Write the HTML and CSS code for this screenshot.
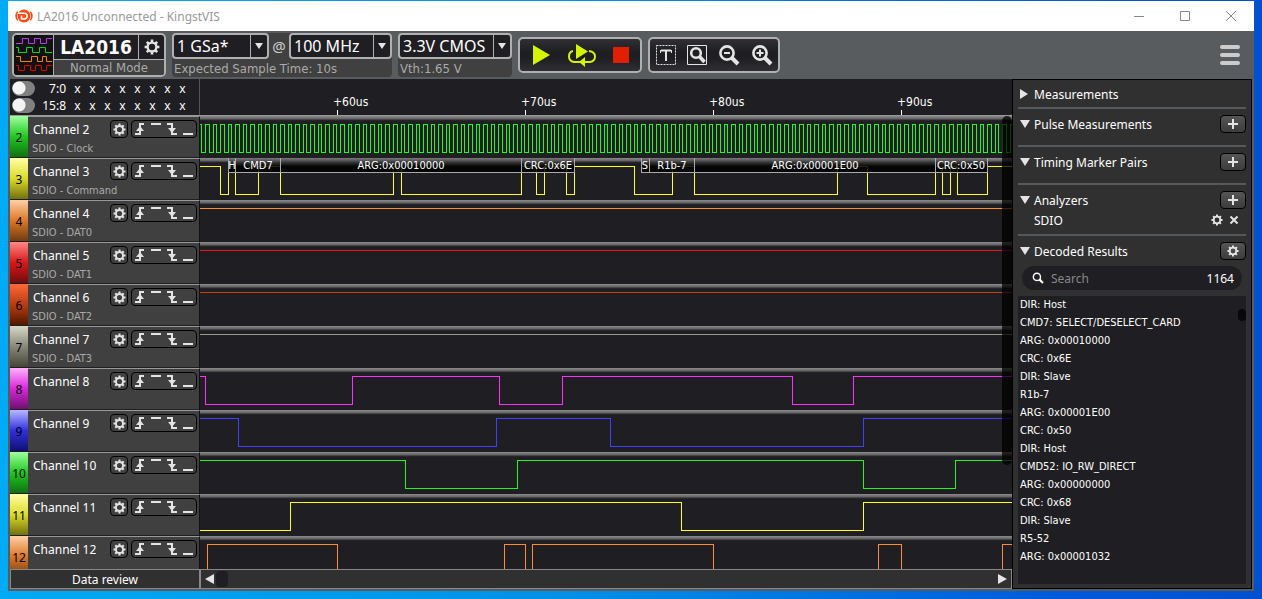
FILE: index.html
```html
<!DOCTYPE html>
<html lang="en">
<head>
    <meta charset="UTF-8">
    <meta name="viewport" content="width=device-width, initial-scale=1.0">
    <title>LA2016 Unconnected - KingstVIS</title>
    <link rel="stylesheet" href="styles.css">
</head>
<body>
    <!-- Shared icons -->
    <svg class="defs" width="0" height="0" aria-hidden="true">
        <symbol id="gear" viewBox="0 0 16 16">
            <circle cx="8" cy="8" r="4.4" fill="none" stroke="currentColor" stroke-width="2.4"/>
            <path d="M8 0.6v2.6M8 12.8v2.6M0.6 8h2.6M12.8 8h2.6M2.8 2.8l1.8 1.8M11.4 11.4l1.8 1.8M2.8 13.2l1.8-1.8M11.4 4.6l1.8-1.8" stroke="currentColor" stroke-width="2.6" fill="none"/>
        </symbol>
        <symbol id="rise" viewBox="0 0 12 14">
            <path d="M1 12h5V2h4" fill="none" stroke="currentColor" stroke-width="2"/>
            <path d="M2 9l4-5 4 5z" fill="currentColor"/>
        </symbol>
        <symbol id="high" viewBox="0 0 12 14">
            <path d="M1 2h10" stroke="currentColor" stroke-width="2"/>
        </symbol>
        <symbol id="fall" viewBox="0 0 12 14">
            <path d="M1 2h5v10h5" fill="none" stroke="currentColor" stroke-width="2"/>
            <path d="M2 6l4 5 4-5z" fill="currentColor"/>
        </symbol>
        <symbol id="low" viewBox="0 0 12 14">
            <path d="M1 12h10" stroke="currentColor" stroke-width="2"/>
        </symbol>
        <symbol id="plus" viewBox="0 0 12 12">
            <path d="M6 1v10M1 6h10" stroke="currentColor" stroke-width="2"/>
        </symbol>
        <symbol id="lens" viewBox="0 0 22 22">
            <circle cx="9" cy="9" r="6.6" fill="none" stroke="currentColor" stroke-width="2.6"/>
            <path d="M13.5 13.5l6.5 6.5" stroke="currentColor" stroke-width="4"/>
        </symbol>
    </svg>

    <div class="window">
        <header class="titlebar">
            <svg class="logo" width="18" height="14" viewBox="0 0 18 14">
                <circle cx="9" cy="7" r="6.5" fill="#ff4a12"/>
                <path d="M2.6 2.6Q-.4 7 2.6 11.4M15.4 2.6Q18.4 7 15.4 11.4" fill="none" stroke="#ff4a12" stroke-width="1.6"/>
                <path d="M3 4.2h6.2a2.8 2.8 0 0 1 0 5.8H6.6V6.5" fill="none" stroke="#fff" stroke-width="1.6"/>
            </svg>
            <h1>LA2016 Unconnected - KingstVIS</h1>
            <button class="win-btn" aria-label="Minimize"><svg width="12" height="12"><path d="M1 6.5h10"/></svg></button>
            <button class="win-btn" aria-label="Maximize"><svg width="12" height="12"><path d="M1.5 1.5h9v9h-9z"/></svg></button>
            <button class="win-btn" aria-label="Close"><svg width="12" height="12"><path d="M1 1l10 10M11 1L1 11"/></svg></button>
        </header>

        <div class="toolbar">
            <div class="device">
                <svg class="device-icon" width="39" height="40" viewBox="0 0 39 40" fill="none">
                    <path stroke="#c030ff" d="M2 8.500h6.500v-5h6v5h6v-5h6v5h6v-5h5.500"/>
                    <path stroke="#00d820" d="M2 12.500h2.500v5h8v-5h6v5h7v-5h6v5h6.500"/>
                    <path stroke="#ff8000" d="M2 21.500h4.500v5h11v-5h6v5h5v-5h4v5h5.500"/>
                    <path stroke="#e00000" d="M2 30.500h2.500v5h6v-5h6v5h5v-5h6v5h5v-5h5.500"/>
                </svg>
                <div class="device-body">
                    <div class="device-top">
                        <strong>LA2016</strong>
                        <button class="device-gear" aria-label="Device settings"><svg width="16" height="16"><use href="#gear"/></svg></button>
                    </div>
                    <div class="device-mode">Normal Mode</div>
                </div>
            </div>

            <div class="setting">
                <div class="setting-row">
                    <span class="combo rate"><select aria-label="Sample depth"><option>1 GSa*</option></select></span>
                    <span class="at">@</span>
                    <span class="combo freq"><select aria-label="Sample rate"><option>100 MHz</option></select></span>
                </div>
                <div class="setting-note">Expected Sample Time: 10s</div>
            </div>

            <div class="setting">
                <div class="setting-row">
                    <span class="combo level"><select aria-label="Threshold"><option>3.3V CMOS</option></select></span>
                </div>
                <div class="setting-note">Vth:1.65 V</div>
            </div>

            <div class="tools run">
                <button aria-label="Start"><svg width="20" height="22"><path fill="#d4f400" d="M2 1l17 10L2 21z"/></svg></button>
                <button aria-label="Loop"><svg width="30" height="26" viewBox="0 0 30 26">
                    <path d="M9 2l12 7.5L9 17z" fill="#d4f400"/>
                    <path d="M6 9Q2 10 2 14.500T7 20h16q5-1 5-5.500T22 9" fill="none" stroke="#d4f400" stroke-width="2"/>
                    <path d="M12 20l6-5v10z" fill="#d4f400"/>
                </svg></button>
                <button aria-label="Stop"><svg width="16" height="16"><path fill="#e02000" d="M0 0h16v16H0z"/></svg></button>
            </div>

            <div class="tools view">
                <button aria-label="Text"><svg width="20" height="20" fill="none" stroke="#e4e4e4">
                    <path d="M.5.5h19v19H.5z" stroke-dasharray="2 1"/><path d="M5 5.500h10M10 5v11" stroke-width="2"/><path d="M4.500 5v3M15.500 5v3"/>
                </svg></button>
                <button aria-label="Zoom to fit"><svg width="20" height="20" viewBox="0 0 20 20">
                    <path d="M.5.5h19v19H.5z" fill="none" stroke="#e4e4e4"/>
                    <circle cx="9" cy="8" r="4.800" fill="none" stroke="#e4e4e4" stroke-width="2.600"/><path d="M12 11l5.500 6" stroke="#e4e4e4" stroke-width="3.600"/>
                </svg></button>
                <button aria-label="Zoom out"><svg width="22" height="22"><use href="#lens"/><path d="M6 9h6" stroke="#e4e4e4" stroke-width="2"/></svg></button>
                <button aria-label="Zoom in"><svg width="22" height="22"><use href="#lens"/><path d="M5.500 9h7M9 5.500v7" stroke="#e4e4e4" stroke-width="2"/></svg></button>
            </div>

            <button class="menu" aria-label="Menu"><i></i><i></i><i></i></button>
        </div>

        <div class="workspace">
            <main class="scope">
                <div class="scope-head">
                    <div class="buses">
                        <label class="bus"><input type="checkbox"><span class="bus-name">7:0</span><span class="bits"><i>x</i><i>x</i><i>x</i><i>x</i><i>x</i><i>x</i><i>x</i><i>x</i></span></label>
                        <label class="bus"><input type="checkbox"><span class="bus-name">15:8</span><span class="bits"><i>x</i><i>x</i><i>x</i><i>x</i><i>x</i><i>x</i><i>x</i><i>x</i></span></label>
                    </div>
                    <div class="ruler"><span>+60us</span><span>+70us</span><span>+80us</span><span>+90us</span></div>
                </div>

                <div class="channels">
                    <section class="channel">
                        <div class="num green">2</div>
                        <div class="info">
                            <div class="info-top"><h2>Channel 2</h2>
                                <button class="gear-btn" aria-label="Channel 2 settings"><svg width="13" height="13"><use href="#gear"/></svg></button>
                                <div class="trigger"><button aria-label="Rising edge"><svg><use href="#rise"/></svg></button><button aria-label="High level"><svg><use href="#high"/></svg></button><button aria-label="Falling edge"><svg><use href="#fall"/></svg></button><button aria-label="Low level"><svg><use href="#low"/></svg></button></div>
                            </div>
                            <p>SDIO - Clock</p>
                        </div>
                        <svg class="trace">
                            <!-- 25 clock cycles per 10us division -->
                            <pattern id="clock" x="5" y="0" width="188" height="42" patternUnits="userSpaceOnUse">
                                <path stroke="#20f820" d="M.5 36.500v-28h4v28h4v-28h3v28h4v-28h4v28h4v-28h3v28h4v-28h4v28h4v-28h3v28h4v-28h4v28h4v-28h3v28h4v-28h4v28h4v-28h3v28h4v-28h4v28h4v-28h3v28h4v-28h4v28h4v-28h3v28h4v-28h4v28h4v-28h3v28h4v-28h4v28h4v-28h3v28h4v-28h4v28h4v-28h3v28h4v-28h4v28h4v-28h3v28h4v-28h4v28h4v-28h3v28h4v-28h4v28h4"/>
                            </pattern>
                            <rect class="fill" width="100%" height="42" fill="url(#clock)"/>
                        </svg>
                    </section>

                    <section class="channel">
                        <div class="num yellow">3</div>
                        <div class="info">
                            <div class="info-top"><h2>Channel 3</h2>
                                <button class="gear-btn" aria-label="Channel 3 settings"><svg width="13" height="13"><use href="#gear"/></svg></button>
                                <div class="trigger"><button aria-label="Rising edge"><svg><use href="#rise"/></svg></button><button aria-label="High level"><svg><use href="#high"/></svg></button><button aria-label="Falling edge"><svg><use href="#fall"/></svg></button><button aria-label="Low level"><svg><use href="#low"/></svg></button></div>
                            </div>
                            <p>SDIO - Command</p>
                        </div>
                        <svg class="trace">
                            <linearGradient id="shade" x2="0" y2="1"><stop offset="0" stop-color="#777"/><stop offset=".6" stop-color="#000"/></linearGradient>
                            <path stroke="#ffff20" d="M0 8.500H20.500v28h8v-28h7v28h23v-28h22v28H193.500v-28h8v28H321.500v-28h15v28h8v-28h22v28h8v-28h60v28h38v-28h22v28H637.500v-28h30v28h68v-28h7v28h8v-28h7v28h30v-28H2000"/>
                            <g class="frames">
                                <rect x="28" width="346" height="14"/>
                                <rect x="441" width="347" height="14"/>
                                <path d="M28.500 0v14.500H374.500V0M35.500 0v14M80.500 0v14M321.500 0v14M441.500 0v14.500H787.500V0M449.500 0v14M494.500 0v14M735.500 0v14"/>
                                <text x="32" y="11">H</text><text x="58" y="11">CMD7</text><text x="201" y="11">ARG:0x00010000</text><text x="348" y="11">CRC:0x6E</text>
                                <text x="445" y="11">S</text><text x="472" y="11">R1b-7</text><text x="615" y="11">ARG:0x00001E00</text><text x="761" y="11">CRC:0x50</text>
                            </g>
                        </svg>
                    </section>

                    <section class="channel">
                        <div class="num orange">4</div>
                        <div class="info">
                            <div class="info-top"><h2>Channel 4</h2>
                                <button class="gear-btn" aria-label="Channel 4 settings"><svg width="13" height="13"><use href="#gear"/></svg></button>
                                <div class="trigger"><button aria-label="Rising edge"><svg><use href="#rise"/></svg></button><button aria-label="High level"><svg><use href="#high"/></svg></button><button aria-label="Falling edge"><svg><use href="#fall"/></svg></button><button aria-label="Low level"><svg><use href="#low"/></svg></button></div>
                            </div>
                            <p>SDIO - DAT0</p>
                        </div>
                        <svg class="trace"><path stroke="#ff8c28" d="M0 8.500H2000"/></svg>
                    </section>

                    <section class="channel">
                        <div class="num red">5</div>
                        <div class="info">
                            <div class="info-top"><h2>Channel 5</h2>
                                <button class="gear-btn" aria-label="Channel 5 settings"><svg width="13" height="13"><use href="#gear"/></svg></button>
                                <div class="trigger"><button aria-label="Rising edge"><svg><use href="#rise"/></svg></button><button aria-label="High level"><svg><use href="#high"/></svg></button><button aria-label="Falling edge"><svg><use href="#fall"/></svg></button><button aria-label="Low level"><svg><use href="#low"/></svg></button></div>
                            </div>
                            <p>SDIO - DAT1</p>
                        </div>
                        <svg class="trace"><path stroke="#f01818" d="M0 8.500H2000"/></svg>
                    </section>

                    <section class="channel">
                        <div class="num rust">6</div>
                        <div class="info">
                            <div class="info-top"><h2>Channel 6</h2>
                                <button class="gear-btn" aria-label="Channel 6 settings"><svg width="13" height="13"><use href="#gear"/></svg></button>
                                <div class="trigger"><button aria-label="Rising edge"><svg><use href="#rise"/></svg></button><button aria-label="High level"><svg><use href="#high"/></svg></button><button aria-label="Falling edge"><svg><use href="#fall"/></svg></button><button aria-label="Low level"><svg><use href="#low"/></svg></button></div>
                            </div>
                            <p>SDIO - DAT2</p>
                        </div>
                        <svg class="trace"><path stroke="#c84010" d="M0 8.500H2000"/></svg>
                    </section>

                    <section class="channel">
                        <div class="num grey">7</div>
                        <div class="info">
                            <div class="info-top"><h2>Channel 7</h2>
                                <button class="gear-btn" aria-label="Channel 7 settings"><svg width="13" height="13"><use href="#gear"/></svg></button>
                                <div class="trigger"><button aria-label="Rising edge"><svg><use href="#rise"/></svg></button><button aria-label="High level"><svg><use href="#high"/></svg></button><button aria-label="Falling edge"><svg><use href="#fall"/></svg></button><button aria-label="Low level"><svg><use href="#low"/></svg></button></div>
                            </div>
                            <p>SDIO - DAT3</p>
                        </div>
                        <svg class="trace"><path stroke="#9a9a88" d="M0 8.500H2000"/></svg>
                    </section>

                    <section class="channel">
                        <div class="num magenta">8</div>
                        <div class="info">
                            <div class="info-top"><h2>Channel 8</h2>
                                <button class="gear-btn" aria-label="Channel 8 settings"><svg width="13" height="13"><use href="#gear"/></svg></button>
                                <div class="trigger"><button aria-label="Rising edge"><svg><use href="#rise"/></svg></button><button aria-label="High level"><svg><use href="#high"/></svg></button><button aria-label="Falling edge"><svg><use href="#fall"/></svg></button><button aria-label="Low level"><svg><use href="#low"/></svg></button></div>
                            </div>
                        </div>
                        <svg class="trace"><path stroke="#ff30ff" d="M0 8.500H5.500v28H152.500v-28H299.500v28H362.500v-28H592.500v28H653.500v-28H2000"/></svg>
                    </section>

                    <section class="channel">
                        <div class="num blue">9</div>
                        <div class="info">
                            <div class="info-top"><h2>Channel 9</h2>
                                <button class="gear-btn" aria-label="Channel 9 settings"><svg width="13" height="13"><use href="#gear"/></svg></button>
                                <div class="trigger"><button aria-label="Rising edge"><svg><use href="#rise"/></svg></button><button aria-label="High level"><svg><use href="#high"/></svg></button><button aria-label="Falling edge"><svg><use href="#fall"/></svg></button><button aria-label="Low level"><svg><use href="#low"/></svg></button></div>
                            </div>
                        </div>
                        <svg class="trace"><path stroke="#4040ff" d="M0 8.500H38.500v28H296.500v-28H410.500v28H663.500v-28H2000"/></svg>
                    </section>

                    <section class="channel">
                        <div class="num green">10</div>
                        <div class="info">
                            <div class="info-top"><h2>Channel 10</h2>
                                <button class="gear-btn" aria-label="Channel 10 settings"><svg width="13" height="13"><use href="#gear"/></svg></button>
                                <div class="trigger"><button aria-label="Rising edge"><svg><use href="#rise"/></svg></button><button aria-label="High level"><svg><use href="#high"/></svg></button><button aria-label="Falling edge"><svg><use href="#fall"/></svg></button><button aria-label="Low level"><svg><use href="#low"/></svg></button></div>
                            </div>
                        </div>
                        <svg class="trace"><path stroke="#20f820" d="M0 8.500H205.500v28H317.500v-28H663.500v28H755.500v-28H2000"/></svg>
                    </section>

                    <section class="channel">
                        <div class="num yellow">11</div>
                        <div class="info">
                            <div class="info-top"><h2>Channel 11</h2>
                                <button class="gear-btn" aria-label="Channel 11 settings"><svg width="13" height="13"><use href="#gear"/></svg></button>
                                <div class="trigger"><button aria-label="Rising edge"><svg><use href="#rise"/></svg></button><button aria-label="High level"><svg><use href="#high"/></svg></button><button aria-label="Falling edge"><svg><use href="#fall"/></svg></button><button aria-label="Low level"><svg><use href="#low"/></svg></button></div>
                            </div>
                        </div>
                        <svg class="trace"><path stroke="#ffff20" d="M0 36.500H90.500v-28H481.500v28H663.500v-28H2000"/></svg>
                    </section>

                    <section class="channel">
                        <div class="num orange">12</div>
                        <div class="info">
                            <div class="info-top"><h2>Channel 12</h2>
                                <button class="gear-btn" aria-label="Channel 12 settings"><svg width="13" height="13"><use href="#gear"/></svg></button>
                                <div class="trigger"><button aria-label="Rising edge"><svg><use href="#rise"/></svg></button><button aria-label="High level"><svg><use href="#high"/></svg></button><button aria-label="Falling edge"><svg><use href="#fall"/></svg></button><button aria-label="Low level"><svg><use href="#low"/></svg></button></div>
                            </div>
                        </div>
                        <svg class="trace"><path stroke="#ff8c28" d="M0 36.500H7.500v-28H137.500v28H304.500v-28H325.500v28H332.500v-28H513.500v28H678.500v-28H701.500v28H802.500v-28H2000"/></svg>
                    </section>
                    <div class="v-thumb"></div>
                </div>

                <footer class="scope-foot">
                    <button class="review">Data review</button>
                    <div class="h-scroll">
                        <button aria-label="Scroll left"><svg width="9" height="10"><path d="M9 0v10L0 5z"/></svg></button>
                        <span class="h-thumb"></span>
                        <button class="right" aria-label="Scroll right"><svg width="9" height="10"><path d="M0 0v10l9-5z"/></svg></button>
                    </div>
                </footer>
            </main>

            <aside class="side">
                <section class="panel">
                    <div class="panel-head"><span class="arrow closed"></span><h3>Measurements</h3></div>
                </section>
                <section class="panel">
                    <div class="panel-head"><span class="arrow"></span><h3>Pulse Measurements</h3><button aria-label="Add pulse measurement"><svg width="12" height="12"><use href="#plus"/></svg></button></div>
                </section>
                <section class="panel">
                    <div class="panel-head"><span class="arrow"></span><h3>Timing Marker Pairs</h3><button aria-label="Add marker pair"><svg width="12" height="12"><use href="#plus"/></svg></button></div>
                </section>
                <section class="panel analyzers">
                    <div class="panel-head"><span class="arrow"></span><h3>Analyzers</h3><button aria-label="Add analyzer"><svg width="12" height="12"><use href="#plus"/></svg></button></div>
                    <div class="analyzer">
                        <span>SDIO</span>
                        <button aria-label="SDIO settings"><svg width="12" height="12"><use href="#gear"/></svg></button>
                        <button aria-label="Remove SDIO"><svg width="10" height="10"><path d="M1.500 1.500l7 7M8.500 1.500l-7 7" stroke="#e4e4e4" stroke-width="2"/></svg></button>
                    </div>
                </section>
                <section class="panel decoded">
                    <div class="panel-head"><span class="arrow"></span><h3>Decoded Results</h3><button aria-label="Decoder settings"><svg width="12" height="12"><use href="#gear"/></svg></button></div>
                    <label class="search">
                        <svg width="12" height="12" viewBox="0 0 22 22"><use href="#lens"/></svg>
                        <input type="text" placeholder="Search" aria-label="Search">
                        <span>1164</span>
                    </label>
                    <div class="results">
                        <ul>
                            <li>DIR: Host</li>
                            <li>CMD7: SELECT/DESELECT_CARD</li>
                            <li>ARG: 0x00010000</li>
                            <li>CRC: 0x6E</li>
                            <li>DIR: Slave</li>
                            <li>R1b-7</li>
                            <li>ARG: 0x00001E00</li>
                            <li>CRC: 0x50</li>
                            <li>DIR: Host</li>
                            <li>CMD52: IO_RW_DIRECT</li>
                            <li>ARG: 0x00000000</li>
                            <li>CRC: 0x68</li>
                            <li>DIR: Slave</li>
                            <li>R5-52</li>
                            <li>ARG: 0x00001032</li>
                        </ul>
                        <div class="list-thumb"></div>
                    </div>
                </section>
            </aside>
        </div>
    </div>
</body>
</html>
```
FILE: styles.css
```css
* {
    box-sizing: border-box;
}

body {
    margin: 0;
    padding: 1px 8px 8px;
    height: 100vh;
    display: flex;
    flex-direction: column;
    overflow: hidden;
    font-family: "Noto Sans", sans-serif;
    font-size: 12px;
    color: #fff;
    background: linear-gradient(to right, #00aaf4, #0090e8 45%, #0058dc 85%, #0050d0);
}

h1, h2, h3, p, ul {
    margin: 0;
    padding: 0;
    font-size: 12px;
    font-weight: normal;
}

button {
    display: flex;
    align-items: center;
    justify-content: center;
    margin: 0;
    padding: 0;
    border: none;
    background: none;
    color: #e4e4e4;
    font-family: inherit;
    font-size: 12px;
    cursor: pointer;
}

svg {
    display: block;
    flex: none;
}

.defs {
    position: absolute;
}

.window {
    flex: 1;
    min-height: 0;
    display: flex;
    flex-direction: column;
    background-color: #595c5f;
}

/* Title bar */
.titlebar {
    height: 30px;
    flex: none;
    display: flex;
    align-items: center;
    padding-left: 7px;
    background-color: #fff;
}

.titlebar h1 {
    flex: 1;
    padding-left: 4px;
    color: #999;
}

.win-btn {
    width: 46px;
    height: 30px;
}

.win-btn svg {
    fill: none;
    stroke: #888;
}

/* Toolbar */
.toolbar {
    flex: none;
    height: 48px;
    display: flex;
    align-items: flex-start;
    gap: 6px;
    padding: 2px 14px 0 4px;
}

.device {
    display: flex;
    width: 154px;
    height: 44px;
    border: 2px solid #b0b0b0;
    border-radius: 5px;
    background-color: #1f1e22;
    overflow: hidden;
}

.device-icon {
    background-color: #111;
}

.device-body {
    flex: 1;
    border-left: 1px solid #b0b0b0;
}

.device-top {
    display: flex;
    height: 25px;
    border-bottom: 1px solid #b0b0b0;
}

.device-top strong {
    flex: 1;
    font-family: "DejaVu Sans Condensed", "DejaVu Sans", sans-serif;
    font-size: 19px;
    line-height: 24px;
    text-align: center;
}

.device-gear {
    width: 26px;
    border-left: 1px solid #b0b0b0;
}

.device-mode {
    height: 15px;
    line-height: 16px;
    font-family: "DejaVu Sans Condensed", "DejaVu Sans", sans-serif;
    font-size: 13px;
    text-align: center;
    color: #aaa;
    background-color: #404040;
}

.setting {
    height: 44px;
    border-radius: 4px;
    background-color: #404040;
}

.setting-row {
    display: flex;
    align-items: center;
}

.at {
    width: 20px;
    line-height: 20px;
    text-align: center;
    font-size: 15px;
    color: #ccc;
}

.combo {
    position: relative;
    height: 26px;
    border: 2px solid #b0b0b0;
    border-radius: 4px;
    background-color: #1f1e22;
}

.rate {
    width: 97px;
}

.freq {
    width: 103px;
}

.level {
    width: 114px;
}

.combo select {
    appearance: none;
    display: block;
    width: 100%;
    height: 22px;
    padding: 0 17px 0 3px;
    border: none;
    background: none;
    color: #fff;
    font-family: inherit;
    font-size: 16px;
    line-height: 22px;
}

.combo::before {
    content: "";
    position: absolute;
    top: 0;
    bottom: 0;
    right: 16px;
    border-left: 1px solid #b0b0b0;
}

.combo::after {
    content: "";
    position: absolute;
    top: 8px;
    right: 4px;
    border: 4px solid transparent;
    border-top: 6px solid #e4e4e4;
    border-bottom: none;
}

.setting-note {
    padding-left: 2px;
    line-height: 19px;
    font-family: "DejaVu Sans Condensed", "DejaVu Sans", sans-serif;
    font-size: 13px;
    color: #aaa;
}

.tools {
    display: flex;
    align-items: center;
    justify-content: space-around;
    height: 36px;
    margin-top: 4px;
    border: 2px solid #b0b0b0;
    border-radius: 5px;
    background: linear-gradient(#303034, #1f1e22 40%, #1f1e22 60%, #303034);
}

.run {
    width: 124px;
    padding: 0 3px;
}

.view {
    width: 132px;
}

.menu {
    flex-direction: column;
    gap: 4px;
    margin: 12px 0 0 auto;
}

.menu i {
    width: 20px;
    height: 4px;
    border-radius: 2px;
    background-color: #ccc;
}

/* Workspace */
.workspace {
    flex: 1;
    min-height: 0;
    display: flex;
    padding: 0 2px 2px;
}

.scope {
    flex: 1;
    min-width: 0;
    display: flex;
    flex-direction: column;
    background-color: #1f1e22;
}

.scope-head {
    flex: none;
    display: flex;
    height: 37px;
    border-bottom: 1px solid #999;
}

.buses {
    width: 190px;
    flex: none;
    padding: 1px 2px 0;
    border-right: 1px solid #555;
}

.bus {
    display: flex;
    align-items: center;
    height: 17px;
}

.bus input {
    appearance: none;
    width: 23px;
    height: 15px;
    margin: 0;
    border-radius: 8px;
    background: radial-gradient(circle at 7px 7px, #f4f4f4 6px, #808080 7px);
}

.bus-name {
    width: 31px;
    text-align: right;
}

.bits {
    display: flex;
    padding-left: 4px;
}

.bits i {
    width: 15px;
    text-align: center;
    font-style: normal;
}

.ruler {
    flex: 1;
    display: flex;
    align-items: flex-end;
    padding-left: 133px;
    overflow: hidden;
    font-family: "DejaVu Sans Condensed", "DejaVu Sans", sans-serif;
}

.ruler span {
    flex: none;
    width: 188px;
    line-height: 15px;
}

.ruler span::after {
    content: "";
    display: block;
    width: 1px;
    height: 5px;
    margin-left: 4px;
    background-color: #fff;
}

/* Channels */
.channels {
    position: relative;
    flex: 1;
    min-height: 0;
    overflow: hidden;
}

.channel {
    display: flex;
    height: 42px;
}

.num {
    width: 18px;
    flex: none;
    padding-top: 2px;
    border-bottom: 1px solid #1f1e22;
    line-height: 40px;
    text-align: center;
    font-size: 12px;
    color: #000;
}

.green { background: linear-gradient(#a0ffa0, #20c820 50%, #107010); }
.yellow { background: linear-gradient(#ffffa8, #dcdc28 50%, #707010); }
.orange { background: linear-gradient(#ffd0a8, #dc7828 50%, #703c10); }
.red { background: linear-gradient(#ff8888, #d81818 50%, #700c0c); }
.rust { background: linear-gradient(#ff6838, #b83c10 50%, #501800); }
.grey { background: linear-gradient(#d8d8c8, #88887a 50%, #444438); }
.magenta { background: linear-gradient(#ffb0ff, #d828d8 50%, #701070); }
.blue { background: linear-gradient(#b8b8ff, #3030e0 50%, #101070); }

.info {
    width: 172px;
    flex: none;
    padding: 3px 2px 0 4px;
    border-top: 1px solid #999;
    border-right: 1px solid #111;
    border-bottom: 1px solid #1f1e22;
    background-color: #404040;
}

.info-top {
    display: flex;
    align-items: center;
    height: 18px;
    gap: 3px;
}

.info h2 {
    flex: 1;
    padding-left: 1px;
}

.info p {
    padding-top: 4px;
    line-height: 14px;
    font-family: "DejaVu Sans Condensed", "DejaVu Sans", sans-serif;
    font-size: 11px;
    color: #aaa;
}

.gear-btn,
.trigger {
    height: 18px;
    border: 1px solid #000;
    border-radius: 4px;
}

.gear-btn {
    width: 18px;
}

.trigger {
    display: flex;
    width: 66px;
}

.trigger button {
    width: 16px;
}

.trigger svg {
    width: 12px;
    height: 14px;
}

.trace {
    flex: 1;
    min-width: 0;
    height: 42px;
    background: linear-gradient(#8c8c8c, #606062 3px, #2c2c30 4px, #1f1e22 5px);
    overflow: hidden;
    fill: none;
    shape-rendering: crispEdges;
}

.frames rect {
    fill: url(#shade);
    fill-opacity: 0.85;
}

.frames path {
    stroke: #aaa;
}

.frames text {
    fill: #fff;
    font-family: "DejaVu Sans Condensed", "DejaVu Sans", sans-serif;
    font-size: 11px;
    text-anchor: middle;
}

.v-thumb {
    position: absolute;
    top: 0;
    right: 0;
    width: 10px;
    height: 349px;
    border-radius: 5px;
    background-color: rgba(0, 0, 0, 0.75);
}

.scope-foot {
    flex: none;
    display: flex;
    height: 20px;
}

.review,
.h-scroll {
    border: 1px solid #888;
    background-color: #303030;
}

.review {
    width: 190px;
    color: #fff;
}

.h-scroll {
    flex: 1;
    display: flex;
    align-items: center;
    gap: 2px;
    padding: 0 4px;
}

.h-scroll svg {
    fill: #e4e4e4;
}

.h-thumb {
    width: 12px;
    height: 16px;
    border-radius: 4px;
    background-color: #1f1e22;
}

.right {
    margin-left: auto;
}

/* Side panel */
.side {
    width: 240px;
    flex: none;
    display: flex;
    flex-direction: column;
    padding: 0 5px 4px;
    border: 1px solid #000;
    background-color: #303030;
}

.panel {
    padding: 6px 0 12px;
    border-bottom: 2px solid #55595c;
}

.panel:first-child {
    padding: 5px 0 4px;
}

.panel-head {
    display: flex;
    align-items: center;
    height: 18px;
}

.panel-head h3 {
    flex: 1;
    padding-left: 4px;
}

.arrow {
    width: 10px;
    margin-left: 2px;
    border: 5px solid transparent;
    border-top: 8px solid #e4e4e4;
    border-bottom: none;
}

.arrow.closed {
    border: 5px solid transparent;
    border-left: 8px solid #e4e4e4;
    border-right: none;
}

.panel-head button {
    width: 26px;
    height: 18px;
    border: 1px solid #000;
    border-radius: 4px;
    background: linear-gradient(#555, #3c3c3c);
}

.analyzers {
    padding-bottom: 5px;
}

.analyzer {
    display: flex;
    align-items: center;
    gap: 6px;
    height: 20px;
    padding: 2px 7px 0 16px;
}

.analyzer span {
    flex: 1;
}

.decoded {
    flex: 1;
    min-height: 0;
    display: flex;
    flex-direction: column;
    padding-bottom: 0;
    border-bottom: none;
}

.decoded .panel-head {
    flex: none;
}

.search {
    flex: none;
    display: flex;
    align-items: center;
    height: 24px;
    margin: 6px 4px;
    padding: 0 8px 0 10px;
    border-radius: 12px;
    background-color: #1f1e22;
    color: #fff;
}

.search input {
    flex: 1;
    min-width: 0;
    padding: 0 7px;
    border: none;
    outline: none;
    background: none;
    color: #fff;
    font-family: inherit;
    font-size: 12px;
}

.search input::placeholder {
    color: #888;
}

.results {
    position: relative;
    flex: 1;
    min-height: 0;
    overflow: hidden;
    background-color: #1f1e22;
    font-family: "DejaVu Sans Condensed", "DejaVu Sans", sans-serif;
}

.results li {
    padding-left: 2px;
    line-height: 18px;
    font-size: 11px;
    list-style: none;
}

.list-thumb {
    position: absolute;
    top: 13px;
    right: 0;
    width: 8px;
    height: 12px;
    border-radius: 4px;
    background-color: #080808;
}
```
